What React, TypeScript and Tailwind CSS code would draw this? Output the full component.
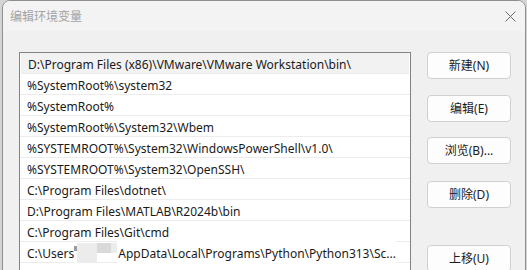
import React from "react";

const rows: string[] = [
  "D:\\Program Files (x86)\\VMware\\VMware Workstation\\bin\\",
  "%SystemRoot%\\system32",
  "%SystemRoot%",
  "%SystemRoot%\\System32\\Wbem",
  "%SYSTEMROOT%\\System32\\WindowsPowerShell\\v1.0\\",
  "%SYSTEMROOT%\\System32\\OpenSSH\\",
  "C:\\Program Files\\dotnet\\",
  "D:\\Program Files\\MATLAB\\R2024b\\bin",
  "C:\\Program Files\\Git\\cmd",
];

const font = { fontFamily: '"Noto Sans", "Noto Sans CJK SC", sans-serif' };

function Btn({ label, mt }: { label: string; mt: string }) {
  return (
    <div
      className={`${mt} w-[84px] h-[27px] rounded-[4px] border border-[#d0d0d0] bg-[#fdfdfd] flex items-center justify-center text-[12px] text-[#1b1b1b]`}
    >
      {label}
    </div>
  );
}

export default function App() {
  return (
    <div
      className="w-[527px] h-[270px] overflow-hidden bg-[#d4d4d4] pl-[2px] pr-[1px]"
      style={font}
    >
      <div className="h-[300px] flex flex-col border border-[#8f8f8f] rounded-t-[8px] bg-[#f0f0f0] overflow-hidden">
        <div className="h-[30px] shrink-0 bg-[#f3f3f3] flex items-center justify-between pl-[7px] pr-[9px]">
          <span className="text-[12px] text-[#a3a3a3]" style={{ fontFamily: '"Noto Sans CJK SC", sans-serif' }}>
            编辑环境变量
          </span>
          <svg width="11" height="11" viewBox="0 0 11 11" className="mt-[1px]">
            <path d="M0.5 0.5 L10.5 10.5 M10.5 0.5 L0.5 10.5" stroke="#6b6b6b" strokeWidth="1" fill="none" />
          </svg>
        </div>
        <div className="flex pt-[21px] pl-[16px]">
          <div className="w-[392px] h-[260px] border border-[#828282] bg-white flex flex-col text-[12px] text-[#1a1a1a]">
            {rows.map((r, i) => (
              <div
                key={i}
                className={`h-[21px] shrink-0 flex items-center pt-[4px] pl-[7px] border-b border-[#ececec] ${i === 0 ? "bg-[#f2f2f2] mx-[1px] pl-[6px]" : ""}`}
              >
                {r}
              </div>
            ))}
            <div className="h-[21px] shrink-0 flex items-center pl-[7px] border-b border-[#ececec] whitespace-nowrap">
              <span className="pt-[4px]">C:\Users</span>
              <span className="inline-flex h-[21px] items-stretch pt-[1px]">
                <span className="w-[3px] bg-white flex items-start"><span className="w-[3px] h-[5px] bg-[#9a9a9a] mt-[3px]" /></span>
                <span className="w-[20px] bg-[#ececec]" />
                <span className="w-[14px] bg-[#d9d9d9] h-[10px]" />
                <span className="w-[14px] bg-[#ececec] h-[10px]" />
              </span>
              <span className="ml-[-8px] bg-white pl-[1px] pt-[4px]">AppData\Local\Programs\Python\Python313\Sc...</span>
            </div>
          </div>
          <div className="ml-[16px] flex flex-col">
            <Btn label="新建(N)" mt="mt-0" />
            <Btn label="编辑(E)" mt="mt-[16px]" />
            <Btn label="浏览(B)..." mt="mt-[15px]" />
            <Btn label="删除(D)" mt="mt-[17px]" />
            <Btn label="上移(U)" mt="mt-[37px]" />
          </div>
        </div>
      </div>
    </div>
  );
}
